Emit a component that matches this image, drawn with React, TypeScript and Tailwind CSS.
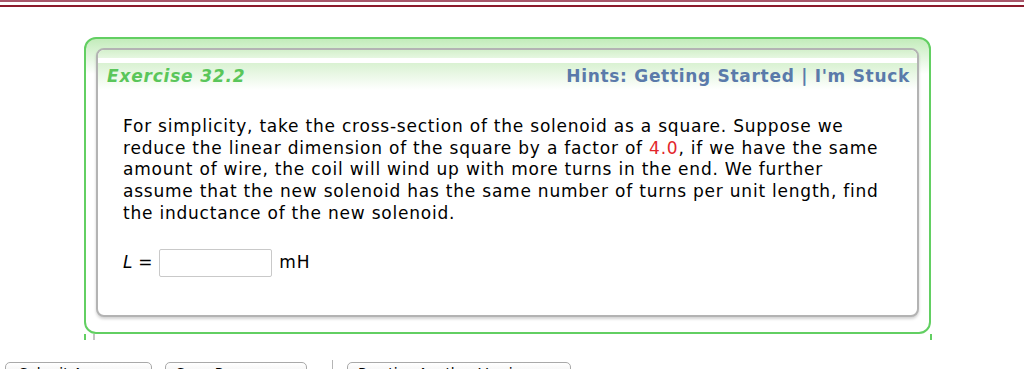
import React from "react";

const body = [
  "For simplicity, take the cross-section of the solenoid as a square. Suppose we",
  null,
  "amount of wire, the coil will wind up with more turns in the end. We further",
  "assume that the new solenoid has the same number of turns per unit length, find",
  "the inductance of the new solenoid.",
];

export default function App() {
  return (
    <div
      className="relative h-[369px] w-[1024px] overflow-hidden bg-white text-black"
      style={{ fontFamily: '"DejaVu Sans", Verdana, sans-serif' }}
    >
      {/* page header rules */}
      <div className="h-[2px] bg-[#a8566a]" />
      <div className="h-[3px]" />
      <div className="h-[2px] bg-[#8c1b2c]" />

      {/* exercise frame */}
      <div className="ml-[84px] mt-[30px] w-[847px] rounded-[12px] border-2 border-[#62cf62] bg-gradient-to-b from-[#c3ecbb] via-white via-[12%] to-white px-[10px] pb-[15px] pt-[9px]">
        <div className="rounded-[8px] border-2 border-[#b3b3b3] bg-white shadow-[0_2px_3px_rgba(0,0,0,0.18)]">
          <div className="h-[8px] rounded-t-[6px] bg-gradient-to-b from-[#d4f0cc] to-[#e6f7e1]" />
          <div className="h-[5px]" />
          <div className="flex h-[27px] items-center justify-between bg-gradient-to-b from-[#d9f2d2] to-white pl-[9px] pr-[7px]">
            <span className="text-[17px] font-bold italic tracking-[0.8px] text-[#5ac65a]">
              Exercise 32.2
            </span>
            <span className="text-[17px] font-bold tracking-[0.7px] text-[#5a7aaa]">
              Hints: Getting Started | I'm Stuck
            </span>
          </div>

          <div className="pb-[38px] pl-[25px] pt-[26px] text-[17px] leading-[21.7px] tracking-[0.78px]">
            {body.map((line, i) =>
              line ? (
                <div key={i} className="whitespace-nowrap">
                  {line}
                </div>
              ) : (
                <div key={i} className="whitespace-nowrap">
                  reduce the linear dimension of the square by a factor of{" "}
                  <span className="text-[#e2262b]">4.0</span>, if we have the same
                </div>
              )
            )}

            <div className="mt-[24px] flex items-center">
              <span className="italic">L</span>
              <span className="ml-[5px]">=</span>
              <input
                type="text"
                className="ml-[6px] h-[28px] w-[113px] rounded-[2px] border border-[#c9c9c9] bg-white outline-none"
              />
              <span className="ml-[7px]">mH</span>
            </div>
          </div>
        </div>
      </div>

      {/* frame stubs */}
      <div className="flex h-[6px]">
        <div className="ml-[84px] w-[2px] bg-[#62cf62]" />
        <div className="ml-[7px] w-[2px] bg-[#c4c4c4]" />
        <div className="ml-[835px] w-[2px] bg-[#62cf62]" />
      </div>

      {/* action buttons */}
      <div className="mt-[22px] flex items-start pl-[5px] text-[14px]">
        <button className="h-[24px] w-[147px] rounded-t-[5px] border border-[#a9a9a9] bg-gradient-to-b from-white to-[#e4e4e4] pl-[13px] text-left">
          Submit Answers
        </button>
        <button className="ml-[13px] h-[24px] w-[142px] rounded-t-[5px] border border-[#a9a9a9] bg-gradient-to-b from-white to-[#e4e4e4] pl-[10px] text-left">
          Save Progress
        </button>
        <div className="ml-[25px] mt-[-2px] h-[12px] w-px bg-[#b5b5b5]" />
        <button className="ml-[14px] h-[24px] w-[224px] rounded-t-[5px] border border-[#a9a9a9] bg-gradient-to-b from-white to-[#e4e4e4] pl-[10px] text-left">
          Practice Another Version
        </button>
      </div>
    </div>
  );
}
